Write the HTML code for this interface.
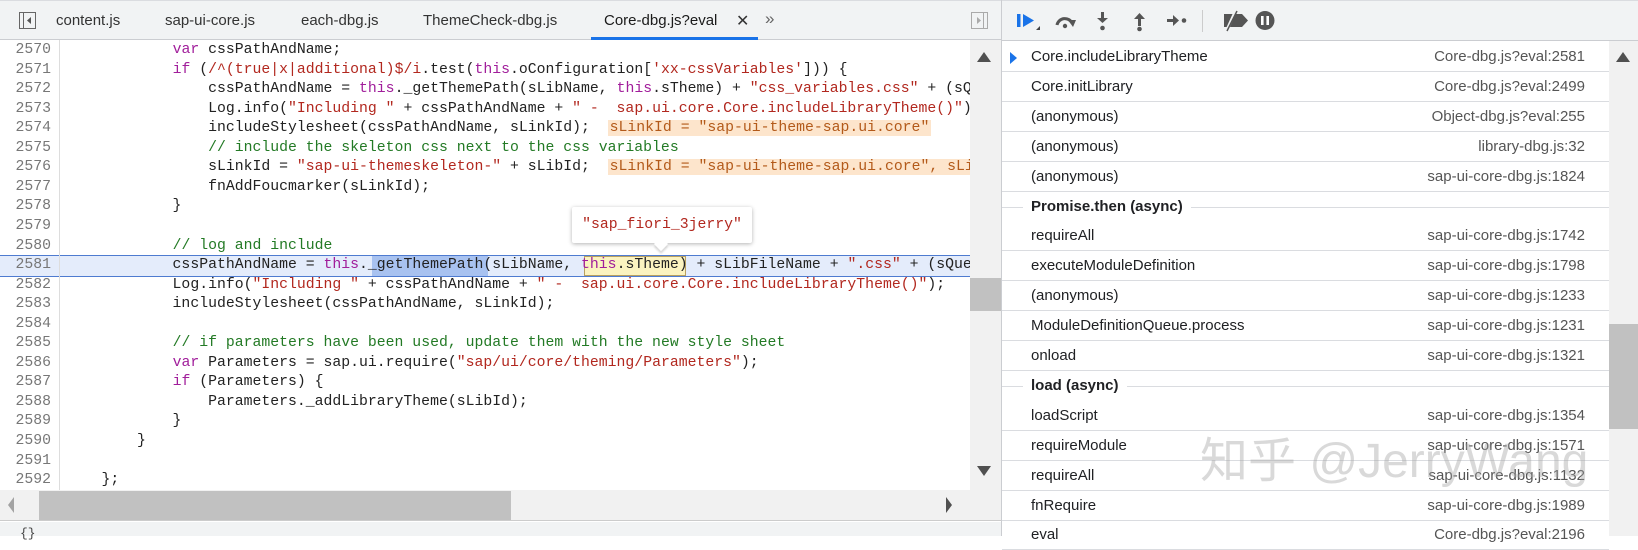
<!DOCTYPE html>
<html><head><meta charset="utf-8"><style>
*{margin:0;padding:0;box-sizing:border-box}
body{width:1638px;height:536px;overflow:hidden;background:#fff;font-family:"Liberation Sans",sans-serif;position:relative;color:#202124}
.abs{position:absolute}
#tabs{left:0;top:0;width:1001px;height:40px;background:#f1f3f4;border-top:1px solid #dadce0;border-bottom:1px solid #cbcdd1}
.tab{position:absolute;top:11px;font-size:15px;color:#333}
#code{left:0;top:40px;width:970px;height:450px;overflow:hidden;background:#fff}
.ln{position:absolute;left:0;width:60px;height:20px;text-align:right;padding-right:8px;border-right:1px solid #ddd;color:#777;font:14.8px/20px "Liberation Mono",monospace}
.cl{position:absolute;left:66px;white-space:pre;font:14.8px/20px "Liberation Mono",monospace;color:#222}
.k{color:#a11e9b}.s{color:#b2281f}.c{color:#237a25}.r{color:#b2281f}
.iv{background:#fde5cc;color:#b35a1a;padding:0 2px}
#right{left:1001px;top:0;width:637px;height:536px;border-left:1px solid #cbcdd1}
.row{position:absolute;left:1002px;width:607px;height:30px;border-bottom:1px solid #dadce0;font-size:15px;line-height:30px}
.row .a{position:absolute;left:29px}.row .b{position:absolute;right:24px;color:#555}
.async{font-weight:bold;border-bottom:none}
.async:before{content:"";position:absolute;left:0;right:0;top:15px;border-top:1px solid #dadce0;z-index:0}
.async .a{background:#fff;padding:0 8px;left:21px;z-index:1}
</style></head><body>
<div id="tabs" class="abs">
 <svg class="abs" style="left:19px;top:11px" width="18" height="18"><rect x=".5" y=".5" width="16" height="16" fill="none" stroke="#666"/><line x1="4.5" y1="1" x2="4.5" y2="16" stroke="#666"/><path d="M12 5 L8 8.5 L12 12Z" fill="#555"/></svg>
 <span class="tab" style="left:56px">content.js</span>
 <span class="tab" style="left:165px">sap-ui-core.js</span>
 <span class="tab" style="left:301px">each-dbg.js</span>
 <span class="tab" style="left:423px">ThemeCheck-dbg.js</span>
 <span class="tab" style="left:604px;color:#1a1a1a">Core-dbg.js?eval</span>
 <span class="tab" style="left:736px;font-size:16px;top:10px">✕</span>
 <span class="tab" style="left:765px;color:#666;font-size:17px;top:8px">»</span>
 <div class="abs" style="left:591px;top:36px;width:167px;height:3px;background:#1a73e8"></div>
 <svg class="abs" style="left:971px;top:11px" width="18" height="18"><rect x=".5" y=".5" width="16" height="16" fill="none" stroke="#aaa"/><line x1="12.5" y1="1" x2="12.5" y2="16" stroke="#aaa"/><path d="M6 5 L10 8.5 L6 12Z" fill="#aaa"/></svg>
</div>
<div id="code" class="abs">
 <div class="abs" style="left:0;top:215px;width:970px;height:22px;background:#e4ecfb;border-top:1px solid #4e7bd0;border-bottom:1px solid #4e7bd0"></div>
 <div class="abs" style="left:372px;top:216px;width:116px;height:20px;background:#a8c2f0"></div>
 <div class="abs" style="left:584px;top:216px;width:102px;height:20px;background:#fbf3c0;border:1px solid #b8a060"></div>
 <div id="lines"></div>
</div>
<div class="abs" style="left:572px;top:207px;width:180px;height:36px;background:#fff;box-shadow:0 1px 4px rgba(0,0,0,.3);border-radius:2px;font:14.8px/36px 'Liberation Mono',monospace;color:#b2281f;text-align:center">"sap_fiori_3jerry"</div>
<div class="abs" style="left:656px;top:239px;width:10px;height:10px;background:#fff;transform:rotate(45deg);box-shadow:2px 2px 2px rgba(0,0,0,.15)"></div>
<div class="abs" style="left:970px;top:40px;width:31px;height:450px;background:#f1f1f1"></div>
<div class="abs" style="left:970px;top:278px;width:31px;height:33px;background:#c1c1c1"></div>
<div class="abs" style="left:977px;top:52px;width:0;height:0;border-left:7px solid transparent;border-right:7px solid transparent;border-bottom:10px solid #505050"></div>
<div class="abs" style="left:977px;top:466px;width:0;height:0;border-left:7px solid transparent;border-right:7px solid transparent;border-top:10px solid #505050"></div>
<div class="abs" style="left:0;top:490px;width:1001px;height:31px;background:#f1f1f1;border-bottom:1px solid #ccc"></div>
<div class="abs" style="left:39px;top:491px;width:472px;height:29px;background:#c1c1c1"></div>
<div class="abs" style="left:8px;top:497px;border-top:8px solid transparent;border-bottom:8px solid transparent;border-right:6px solid #a3a3a3"></div>
<div class="abs" style="left:946px;top:497px;border-top:8px solid transparent;border-bottom:8px solid transparent;border-left:6px solid #505050"></div>
<div class="abs" style="left:0;top:522px;width:1001px;height:14px;background:#f1f3f4;font:13px 'Liberation Mono',monospace;color:#444;padding-left:20px;line-height:24px">{}</div>
<div id="right" class="abs"></div>
<div class="abs" style="left:1002px;top:0;width:636px;height:41px;background:#f1f3f4;border-top:1px solid #dadce0;border-bottom:1px solid #cbcdd1"></div>
<svg class="abs" style="left:1010px;top:8px" width="280" height="30">
 <rect x="7" y="6" width="3.5" height="13" fill="#1a73e8"/><path d="M13 6 L24 12.5 L13 19Z" fill="#1a73e8"/><path d="M26 22 L30 22 L30 18Z" fill="#444"/>
 <path d="M47 17 A8 8 0 0 1 62 15" fill="none" stroke="#555" stroke-width="3"/><path d="M58 12 L66 12 L63 19Z" fill="#555"/><circle cx="55" cy="18" r="2.2" fill="#555"/>
 <rect x="91" y="4" width="3" height="8" fill="#555"/><path d="M87 10 L98 10 L92.5 15Z" fill="#555"/><circle cx="92.5" cy="20" r="2.3" fill="#555"/>
 <rect x="128" y="10" width="3" height="8" fill="#555"/><path d="M124 11 L135 11 L129.5 5Z" fill="#555"/><circle cx="129.5" cy="21" r="2.3" fill="#555"/>
 <rect x="157" y="11" width="8" height="3" fill="#555"/><path d="M163 7 L169 12.5 L163 18Z" fill="#555"/><circle cx="174" cy="12.5" r="2.3" fill="#555"/>
 <line x1="192.5" y1="2" x2="192.5" y2="24" stroke="#ccc"/>
 <path d="M214 6 L232 6 L238 12.5 L232 19 L214 19Z" fill="#555"/><line x1="226" y1="2" x2="216" y2="24" stroke="#f1f3f4" stroke-width="3"/><line x1="227" y1="3" x2="217" y2="23" stroke="#555" stroke-width="1.5"/>
 <circle cx="255" cy="12.5" r="9.5" fill="#555"/><rect x="251" y="8" width="2.6" height="9" fill="#fff"/><rect x="256.4" y="8" width="2.6" height="9" fill="#fff"/>
</svg>
<div id="rows"></div>
<div class="abs" style="left:1609px;top:41px;width:29px;height:495px;background:#f1f1f1"></div>
<div class="abs" style="left:1609px;top:324px;width:29px;height:105px;background:#c1c1c1"></div>
<div class="abs" style="left:1616px;top:52px;border-left:7px solid transparent;border-right:7px solid transparent;border-bottom:10px solid #505050"></div>
<div class="abs" style="left:1010px;top:52px;width:0;height:0;border-top:6px solid transparent;border-bottom:6px solid transparent;border-left:7px solid #1a73e8"></div>
<div class="abs" style="left:1200px;top:434px;font:48px/56px 'Liberation Sans','Noto Sans CJK SC',sans-serif;color:rgba(160,160,160,.4);white-space:nowrap">知乎 @JerryWang</div>
<script>
const L=[
[2570,'            <span class="k">var</span> cssPathAndName;'],
[2571,'            <span class="k">if</span> (<span class="r">/^(true|x|additional)$/i</span>.test(<span class="k">this</span>.oConfiguration[<span class="s">\'xx-cssVariables\'</span>])) {'],
[2572,'                cssPathAndName = <span class="k">this</span>._getThemePath(sLibName, <span class="k">this</span>.sTheme) + <span class="s">"css_variables.css"</span> + (sQuery ? sQuery : "")'],
[2573,'                Log.info(<span class="s">"Including "</span> + cssPathAndName + <span class="s">" -  sap.ui.core.Core.includeLibraryTheme()"</span>);'],
[2574,'                includeStylesheet(cssPathAndName, sLinkId);  <span class="iv">sLinkId = "sap-ui-theme-sap.ui.core"</span>'],
[2575,'                <span class="c">// include the skeleton css next to the css variables</span>'],
[2576,'                sLinkId = <span class="s">"sap-ui-themeskeleton-"</span> + sLibId;  <span class="iv">sLinkId = "sap-ui-theme-sap.ui.core", sLibId = "sap.ui.core"</span>'],
[2577,'                fnAddFoucmarker(sLinkId);'],
[2578,'            }'],
[2579,''],
[2580,'            <span class="c">// log and include</span>'],
[2581,'            cssPathAndName = <span class="k">this</span>._getThemePath(sLibName, <span class="k">this</span>.sTheme) + sLibFileName + <span class="s">".css"</span> + (sQuery ? sQuery : "");'],
[2582,'            Log.info(<span class="s">"Including "</span> + cssPathAndName + <span class="s">" -  sap.ui.core.Core.includeLibraryTheme()"</span>);'],
[2583,'            includeStylesheet(cssPathAndName, sLinkId);'],
[2584,''],
[2585,'            <span class="c">// if parameters have been used, update them with the new style sheet</span>'],
[2586,'            <span class="k">var</span> Parameters = sap.ui.require(<span class="s">"sap/ui/core/theming/Parameters"</span>);'],
[2587,'            <span class="k">if</span> (Parameters) {'],
[2588,'                Parameters._addLibraryTheme(sLibId);'],
[2589,'            }'],
[2590,'        }'],
[2591,''],
[2592,'    };']];
let h='';L.forEach((l,i)=>{const t=i*19.55;h+=`<div class="ln" style="top:${t}px">${l[0]}</div><div class="cl" style="top:${t}px">${l[1]}</div>`});
h+=`<div class="ln" style="top:${L.length*19.55}px;height:30px"></div>`;
document.getElementById('lines').innerHTML=h;
const R=[['Core.includeLibraryTheme','Core-dbg.js?eval:2581'],['Core.initLibrary','Core-dbg.js?eval:2499'],['(anonymous)','Object-dbg.js?eval:255'],['(anonymous)','library-dbg.js:32'],['(anonymous)','sap-ui-core-dbg.js:1824'],['Promise.then (async)',null],['requireAll','sap-ui-core-dbg.js:1742'],['executeModuleDefinition','sap-ui-core-dbg.js:1798'],['(anonymous)','sap-ui-core-dbg.js:1233'],['ModuleDefinitionQueue.process','sap-ui-core-dbg.js:1231'],['onload','sap-ui-core-dbg.js:1321'],['load (async)',null],['loadScript','sap-ui-core-dbg.js:1354'],['requireModule','sap-ui-core-dbg.js:1571'],['requireAll','sap-ui-core-dbg.js:1132'],['fnRequire','sap-ui-core-dbg.js:1989'],['eval','Core-dbg.js?eval:2196']];
let r='';R.forEach((x,i)=>{const t=42+i*29.9;r+=`<div class="row${x[1]?'':' async'}" style="top:${t}px"><span class="a">${x[0]}</span>${x[1]?`<span class="b">${x[1]}</span>`:''}</div>`});
document.getElementById('rows').innerHTML=r;
</script>
</body></html>
